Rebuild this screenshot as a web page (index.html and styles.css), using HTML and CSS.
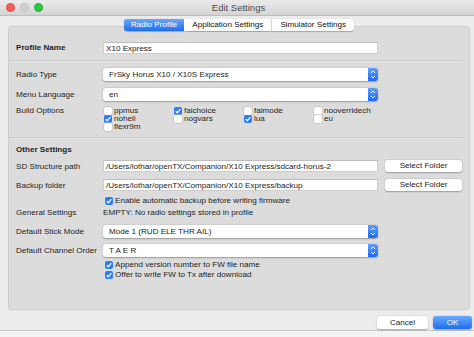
FILE: index.html
```html
<!DOCTYPE html>
<html lang="en">
<head>
    <meta charset="UTF-8">
    <title>Edit Settings</title>
    <link rel="stylesheet" href="styles.css">
</head>
<body>
    <div class="window">
        <div class="titlebar">
            <div class="lights">
                <span class="light red"></span>
                <span class="light grey"></span>
                <span class="light green"></span>
            </div>
            <div class="title">Edit Settings</div>
            <div></div>
        </div>

        <div class="content">
            <div class="tabs">
                <span class="tab active">Radio Profile</span>
                <span class="tab">Application Settings</span>
                <span class="tab">Simulator Settings</span>
            </div>

            <div class="pane">
                <div class="row r-profile">
                    <span class="label bold">Profile Name</span>
                    <span class="field">X10 Express</span>
                </div>
                <div class="sep s1"></div>

                <div class="row r-radio">
                    <span class="label">Radio Type</span>
                    <span class="select">FrSky Horus X10 / X10S Express<span class="stepper"></span></span>
                </div>
                <div class="row r-lang">
                    <span class="label">Menu Language</span>
                    <span class="select">en<span class="stepper"></span></span>
                </div>
                <div class="row r-build">
                    <span class="label">Build Options</span>
                    <div class="options">
                        <label class="check"><span class="box"></span>ppmus</label>
                        <label class="check"><span class="box on"></span>faichoice</label>
                        <label class="check"><span class="box"></span>faimode</label>
                        <label class="check"><span class="box"></span>nooverridech</label>
                        <label class="check"><span class="box on"></span>noheli</label>
                        <label class="check"><span class="box"></span>nogvars</label>
                        <label class="check"><span class="box on"></span>lua</label>
                        <label class="check"><span class="box"></span>eu</label>
                        <label class="check"><span class="box"></span>flexr9m</label>
                    </div>
                </div>
                <div class="sep s2"></div>

                <div class="row r-other">
                    <span class="label bold">Other Settings</span>
                </div>
                <div class="row r-sd">
                    <span class="label">SD Structure path</span>
                    <span class="field">/Users/lothar/openTX/Companion/X10 Express/sdcard-horus-2</span>
                    <span class="button">Select Folder</span>
                </div>
                <div class="row r-backup">
                    <span class="label">Backup folder</span>
                    <span class="field">/Users/lothar/openTX/Companion/X10 Express/backup</span>
                    <span class="button">Select Folder</span>
                </div>
                <div class="row r-enable">
                    <span class="label"></span>
                    <label class="check wide"><span class="box on"></span>Enable automatic backup before writing firmware</label>
                </div>
                <div class="row r-general">
                    <span class="label">General Settings</span>
                    <span class="plain">EMPTY: No radio settings stored in profile</span>
                </div>
                <div class="row r-stick">
                    <span class="label">Default Stick Mode</span>
                    <span class="select">Mode 1 (RUD ELE THR AIL)<span class="stepper"></span></span>
                </div>
                <div class="row r-channel">
                    <span class="label">Default Channel Order</span>
                    <span class="select">T A E R<span class="stepper"></span></span>
                </div>
                <div class="row r-append">
                    <span class="label"></span>
                    <label class="check wide"><span class="box on"></span>Append version number to FW file name</label>
                </div>
                <div class="row r-offer">
                    <span class="label"></span>
                    <label class="check wide"><span class="box on"></span>Offer to write FW to Tx after download</label>
                </div>
            </div>

            <div class="actions">
                <span class="button cancel">Cancel</span>
                <span class="button ok">OK</span>
            </div>
        </div>
    </div>
</body>
</html>
```

FILE: styles.css
```css
* {
    box-sizing: border-box;
}

body {
    margin: 0;
    background-color: #f3f3f3;
    font-family: 'Liberation Sans', Arial, sans-serif;
    font-size: 8.1px;
    color: #1c1c1c;
}

.window {
    width: 474px;
    height: 331px;
    background-color: #ececec;
    border-bottom: 1px solid #c6c6c6;
    display: flex;
    flex-direction: column;
}

/* title bar */

.titlebar {
    height: 16px;
    background: linear-gradient(#ebebeb, #d4d4d4);
    border-bottom: 1px solid #bcbcbc;
    display: grid;
    grid-template-columns: 1fr auto 1fr;
    align-items: center;
}

.lights {
    display: flex;
    gap: 5px;
    padding-left: 6px;
}

.light {
    width: 9px;
    height: 9px;
    border-radius: 50%;
}

.light.red {
    background-color: #fc5f57;
    border: 1px solid #e2463f;
}

.light.grey {
    background-color: #cfcfcf;
    border: 1px solid #c1c1c1;
}

.light.green {
    background-color: #2ac940;
    border: 1px solid #1faa31;
}

.title {
    font-size: 9.5px;
    color: #4b4b4b;
    padding-left: 3px;
}

/* content */

.content {
    padding-left: 8px;
    display: flex;
    flex-direction: column;
}

.tabs {
    display: flex;
    justify-content: center;
    width: 462px;
    margin-top: 3px;
    margin-bottom: -5px;
    position: relative;
    z-index: 1;
    height: 12px;
}

.tab {
    background-color: #ffffff;
    height: 12px;
    line-height: 12px;
    padding: 0 8px;
    color: #111;
    box-shadow: 0 0.5px 1px rgba(0, 0, 0, 0.25);
}

.tab:first-child {
    border-radius: 3px 0 0 3px;
}

.tab:last-child {
    border-radius: 0 3px 3px 0;
    border-left: 1px solid #d8d8d8;
}

.tab.active {
    background: linear-gradient(#6aa8fa, #1d6ff2);
    color: #ffffff;
    padding: 0 7px;
}

.pane {
    width: 462px;
    height: 284px;
    background-color: #dcdcdc;
    border: 1px solid #cecece;
    border-radius: 3px;
    padding: 13px 6px 0 0;
    display: flex;
    flex-direction: column;
}

.row {
    display: grid;
    grid-template-columns: 87px 275px 77px;
    column-gap: 7px;
    align-items: center;
}

.label {
    padding-left: 7px;
    white-space: nowrap;
}

.bold {
    font-weight: bold;
}

.sep {
    height: 2px;
    border-top: 1px solid #c9c9c9;
    border-bottom: 1px solid #e6e6e6;
}

.s1 { margin-top: 5px; }
.s2 { margin-top: 6px; }

.r-profile { height: 15px; }
.r-radio { height: 15px; margin-top: 5px; }
.r-lang { height: 14px; margin-top: 5px; }
.r-build { height: 24px; margin-top: 6px; align-items: start; }
.r-other { height: 12px; margin-top: 4px; }
.r-sd { height: 12px; margin-top: 5px; }
.r-backup { height: 12px; margin-top: 7px; }
.r-enable { height: 10px; margin-top: 5px; }
.r-general { height: 10px; margin-top: 1px; }
.r-stick { height: 14px; margin-top: 7px; }
.r-channel { height: 13px; margin-top: 6px; }
.r-append { height: 10px; margin-top: 3px; }
.r-offer { height: 10px; }

.r-build .label {
    line-height: 8px;
}

/* inputs */

.field {
    height: 12px;
    line-height: 11px;
    background-color: #ffffff;
    border: 1px solid #cdcdcd;
    border-top-color: #bdbdbd;
    padding-left: 2px;
    white-space: nowrap;
    overflow: hidden;
}

.select {
    height: 100%;
    max-height: 13px;
    display: flex;
    align-items: center;
    justify-content: space-between;
    background-color: #ffffff;
    border-radius: 3px;
    box-shadow: 0 0.5px 1.5px rgba(0, 0, 0, 0.3);
    padding-left: 6px;
}

.stepper {
    width: 10px;
    height: 100%;
    border-radius: 0 3px 3px 0;
    background-image: url("data:image/svg+xml;utf8,<svg xmlns='http://www.w3.org/2000/svg' viewBox='0 0 10 13'><path d='M3 5 L5 3 L7 5 M3 8 L5 10 L7 8' fill='none' stroke='white' stroke-width='1'/></svg>"), linear-gradient(#5f9ff8, #1f6aee);
}

.button {
    height: 12px;
    line-height: 12px;
    text-align: center;
    background-color: #ffffff;
    border-radius: 3px;
    box-shadow: 0 0.5px 1.5px rgba(0, 0, 0, 0.3);
    white-space: nowrap;
}

.plain {
    grid-column: 2 / 4;
    white-space: nowrap;
}

/* checkboxes */

.options {
    display: grid;
    grid-template-columns: repeat(4, 70px);
    grid-auto-rows: 8px;
    padding-left: 1px;
}

.check {
    display: flex;
    align-items: center;
    gap: 2px;
    line-height: 8px;
    white-space: nowrap;
}

.check.wide {
    grid-column: 2 / 4;
    padding-left: 2px;
}

.box {
    width: 8px;
    height: 8px;
    flex: none;
    background-color: #ffffff;
    border-radius: 2px;
    box-shadow: 0 0 0 0.5px #b8b8b8;
}

.box.on {
    background: #2d7cf5 url("data:image/svg+xml;utf8,<svg xmlns='http://www.w3.org/2000/svg' viewBox='0 0 8 8'><path d='M1.8 4.2 L3.3 5.8 L6.3 2.1' fill='none' stroke='white' stroke-width='1.3'/></svg>");
    box-shadow: none;
}

/* footer buttons */

.actions {
    display: flex;
    justify-content: flex-end;
    gap: 5px;
    margin-top: 6px;
    padding-right: 2px;
}

.button.cancel {
    width: 51px;
    height: 13px;
    line-height: 13px;
}

.button.ok {
    width: 39px;
    height: 13px;
    line-height: 13px;
    color: #ffffff;
    background: linear-gradient(#6aa8fa, #1d6ff2);
}
```
